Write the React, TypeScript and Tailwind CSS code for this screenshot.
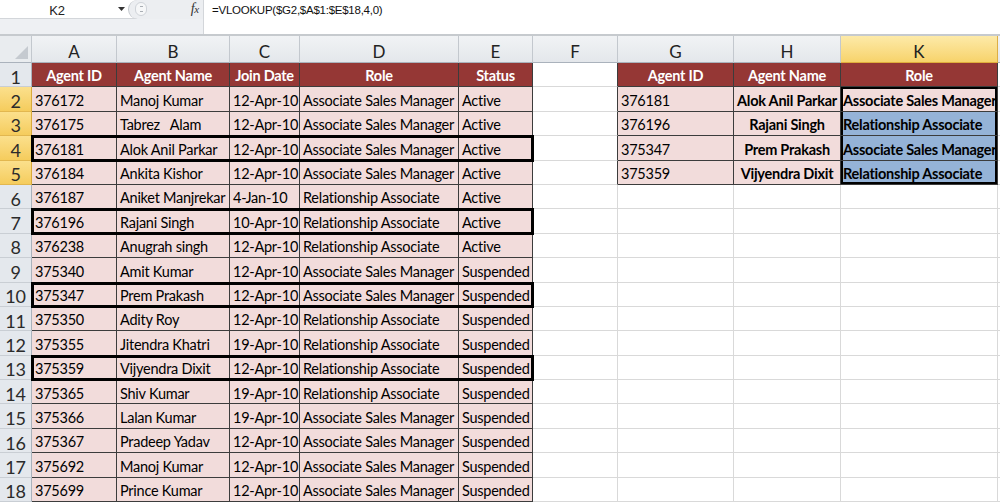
import React from "react";

type Row = [string, string, string, string, string];

const DATA: Row[] = [
  ["376172", "Manoj Kumar", "12-Apr-10", "Associate Sales Manager", "Active"],
  ["376175", "Tabrez\u00a0\u00a0\u00a0Alam", "12-Apr-10", "Associate Sales Manager", "Active"],
  ["376181", "Alok Anil Parkar", "12-Apr-10", "Associate Sales Manager", "Active"],
  ["376184", "Ankita Kishor", "12-Apr-10", "Associate Sales Manager", "Active"],
  ["376187", "Aniket Manjrekar", "4-Jan-10", "Relationship Associate", "Active"],
  ["376196", "Rajani Singh", "10-Apr-10", "Relationship Associate", "Active"],
  ["376238", "Anugrah singh", "12-Apr-10", "Relationship Associate", "Active"],
  ["375340", "Amit Kumar", "12-Apr-10", "Associate Sales Manager", "Suspended"],
  ["375347", "Prem Prakash", "12-Apr-10", "Associate Sales Manager", "Suspended"],
  ["375350", "Adity Roy", "12-Apr-10", "Relationship Associate", "Suspended"],
  ["375355", "Jitendra Khatri", "19-Apr-10", "Relationship Associate", "Suspended"],
  ["375359", "Vijyendra Dixit", "12-Apr-10", "Relationship Associate", "Suspended"],
  ["375365", "Shiv Kumar", "19-Apr-10", "Relationship Associate", "Suspended"],
  ["375366", "Lalan Kumar", "19-Apr-10", "Associate Sales Manager", "Suspended"],
  ["375367", "Pradeep Yadav", "12-Apr-10", "Associate Sales Manager", "Suspended"],
  ["375692", "Manoj Kumar", "12-Apr-10", "Associate Sales Manager", "Suspended"],
  ["375699", "Prince Kumar", "12-Apr-10", "Associate Sales Manager", "Suspended"],
];

const LOOKUP: [string, string, string][] = [
  ["376181", "Alok Anil Parkar", "Associate Sales Manager"],
  ["376196", "Rajani Singh", "Relationship Associate"],
  ["375347", "Prem Prakash", "Associate Sales Manager"],
  ["375359", "Vijyendra Dixit", "Relationship Associate"],
];

// rows outlined with a thick black box across A:E
const BOXED = [4, 7, 10, 13];

const W = {
  A: "w-[85px]",
  B: "w-[113px]",
  C: "w-[70px]",
  D: "w-[159px]",
  E: "w-[74px]",
  F: "w-[85px]",
  G: "w-[116px]",
  H: "w-[107px]",
  K: "w-[157px]",
};

const dark = "border-r border-b border-[#3c3c3c]";
const light = "border-r border-b border-[#d9d9d9]";
const headCell = `${dark} bg-[#953735] text-white font-bold justify-center`;
const pinkCell = `${dark} bg-[#f2dcdb] text-black`;

function Cell({ w, className, children }: { w: string; className: string; children?: React.ReactNode }) {
  return (
    <div className={`${w} shrink-0 h-full flex items-center px-[3px] pt-[4px] whitespace-nowrap overflow-hidden relative ${className}`}>
      {children}
    </div>
  );
}

function RowHeader({ n }: { n: number }) {
  const on = n >= 2 && n <= 5;
  return (
    <div
      className={`w-[32px] shrink-0 h-full flex items-center justify-center pt-[4px] text-[18px] text-[#2b2b2b] border-r border-b ${
        on
          ? "bg-gradient-to-b from-[#fbe08c] to-[#f5cc5c] border-r-[#d9a93a] border-b-[#e2b74f]"
          : "bg-[#e4e8ed] border-r-[#aab2bc] border-b-[#c9ced4]"
      }`}
    >
      {n}
    </div>
  );
}

function ColHeader({ w, label, on }: { w: string; label: string; on?: boolean }) {
  return (
    <div
      className={`${w} shrink-0 h-full flex items-center justify-center pt-[4px] text-[17px] text-[#222] border-r border-b ${
        on
          ? "bg-gradient-to-b from-[#fdeaa8] to-[#f7d36a] border-r-[#dcae45] border-b-[#e0ae3c]"
          : "bg-gradient-to-b from-[#f1f3f5] to-[#e4e7eb] border-r-[#c3c8ce] border-b-[#aab2bc]"
      }`}
    >
      {label}
    </div>
  );
}

function KSelection({ n }: { n: number }) {
  const sides =
    n === 2 ? "border-t-[3px] border-x-[3px]" : n === 5 ? "border-b-[3px] border-x-[3px]" : "border-x-[3px]";
  return <div className={`pointer-events-none absolute -inset-px z-10 border-black ${sides}`} />;
}

function DataRow({ n }: { n: number }) {
  const isHead = n === 1;
  const r = DATA[n - 2];
  const look = n >= 2 && n <= 5 ? LOOKUP[n - 2] : null;
  const main = isHead ? headCell : pinkCell;

  return (
    <div className="flex h-[24.4px]">
      <RowHeader n={n} />
      <div className="relative flex h-full">
        <Cell w={W.A} className={main}>{isHead ? "Agent ID" : r[0]}</Cell>
        <Cell w={W.B} className={main}>{isHead ? "Agent Name" : r[1]}</Cell>
        <Cell w={W.C} className={main}>{isHead ? "Join Date" : r[2]}</Cell>
        <Cell w={W.D} className={main}>{isHead ? "Role" : r[3]}</Cell>
        <Cell w={W.E} className={main}>{isHead ? "Status" : r[4]}</Cell>
        {BOXED.includes(n) && (
          <div className="pointer-events-none absolute -inset-px z-10 border-[3px] border-black" />
        )}
      </div>
      <Cell
        w={W.F}
        className={`bg-white border-b border-b-[#d9d9d9] border-r ${n <= 5 ? "border-r-[#3c3c3c]" : "border-r-[#d9d9d9]"}`}
      />
      {isHead ? (
        <>
          <Cell w={W.G} className={headCell}>Agent ID</Cell>
          <Cell w={W.H} className={headCell}>Agent Name</Cell>
          <Cell w={W.K} className={headCell}>Role</Cell>
        </>
      ) : look ? (
        <>
          <Cell w={W.G} className={pinkCell}>{look[0]}</Cell>
          <Cell w={W.H} className={`${pinkCell} font-bold justify-center !px-0`}>{look[1]}</Cell>
          <Cell
            w={W.K}
            className={`${dark} font-bold text-black !px-[2px] ${n === 2 ? "bg-[#f2dcdb]" : "bg-[#95b3d7]"}`}
          >
            {look[2]}
            <KSelection n={n} />
          </Cell>
        </>
      ) : (
        <>
          <Cell w={W.G} className={`bg-white ${light}`} />
          <Cell w={W.H} className={`bg-white ${light}`} />
          <Cell w={W.K} className={`bg-white ${light}`} />
        </>
      )}
      <div className="flex-1 h-full bg-white border-b border-[#d9d9d9]" />
    </div>
  );
}

function FormulaBar() {
  return (
    <div className="flex h-[34px] font-['Liberation_Sans',sans-serif]">
      <div className="w-[203px] shrink-0 flex flex-col">
        <div className="h-[19px] flex items-center bg-white border-b border-[#d3d6da]">
          <div className="w-[114px] text-center text-[13px] text-[#222] pt-[2px]">K2</div>
          <div className="w-[14px] flex justify-center">
            <svg width="7" height="4" viewBox="0 0 7 4">
              <path d="M0 0h7L3.5 4z" fill="#333" />
            </svg>
          </div>
          <div className="flex-1 h-[19px] flex items-center justify-between bg-[#eceef1] rounded-l-full border-l border-[#c4c8cd] pl-[6px] pr-[4px]">
            <div className="w-[12px] h-[14px] rounded-full border border-[#cfd3d8] bg-[#f6f7f8] flex items-center justify-center">
              <div className="w-[3px] h-[6px] border-y border-[#a9aeb4]" />
            </div>
            <span className="font-['Liberation_Serif',serif] italic text-[14px] text-[#333] leading-none">
              f<span className="text-[11px]">x</span>
            </span>
          </div>
        </div>
        <div className="flex-1 bg-[#eef0f3]" />
      </div>
      <div className="flex-1 bg-white border-l border-[#d3d6da] pl-[8px] pt-[5px] text-[11.5px] text-[#111]">
        =VLOOKUP($G2,$A$1:$E$18,4,0)
      </div>
    </div>
  );
}

export default function App() {
  const rows = Array.from({ length: 18 }, (_, i) => i + 1);
  return (
    <div className="w-[1000px] h-[504px] overflow-hidden bg-white font-['Lato',sans-serif] text-[14.5px] tracking-[-0.25px] leading-none">
      <FormulaBar />
      <div className="h-[2px] bg-[#c6cace]" />
      <div className="flex h-[27px] tracking-normal">
        <div className="w-[32px] shrink-0 h-full bg-[#e9ecef] border-r border-b border-r-[#c3c8ce] border-b-[#aab2bc] flex items-end justify-end p-[3px]">
          <svg width="13" height="13" viewBox="0 0 13 13">
            <path d="M13 0V13H0z" fill="#c5cad0" />
          </svg>
        </div>
        <ColHeader w={W.A} label="A" />
        <ColHeader w={W.B} label="B" />
        <ColHeader w={W.C} label="C" />
        <ColHeader w={W.D} label="D" />
        <ColHeader w={W.E} label="E" />
        <ColHeader w={W.F} label="F" />
        <ColHeader w={W.G} label="G" />
        <ColHeader w={W.H} label="H" />
        <ColHeader w={W.K} label="K" on />
        <div className="flex-1 h-full bg-gradient-to-b from-[#f1f3f5] to-[#e4e7eb] border-b border-[#aab2bc]" />
      </div>
      {rows.map((n) => (
        <DataRow key={n} n={n} />
      ))}
    </div>
  );
}
